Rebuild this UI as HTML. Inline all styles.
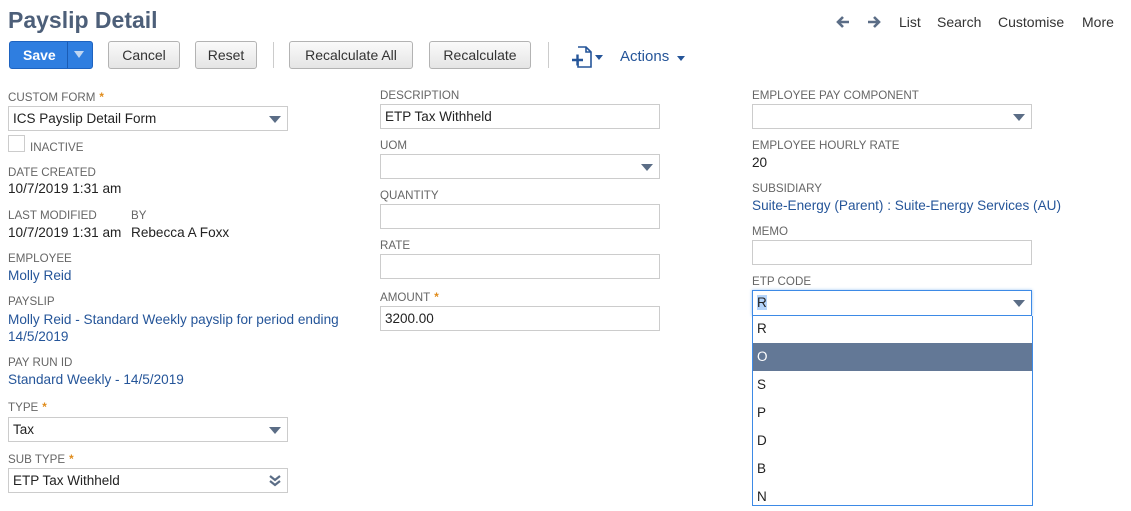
<!DOCTYPE html>
<html><head><meta charset="utf-8"><style>
*{box-sizing:border-box;margin:0;padding:0}
body{width:1131px;height:500px;overflow:hidden;background:#fff;font-family:"Liberation Sans",sans-serif;font-size:13.6px;color:#222;position:relative}
.a{position:absolute;white-space:nowrap}
.lbl{position:absolute;font-size:11.6px;color:#666;line-height:14px;white-space:nowrap}
.lbl b{color:#e08c1c;font-weight:bold;margin-left:4px}
.val{position:absolute;line-height:16px;white-space:nowrap}
.lnk{color:#255599}
.inp{position:absolute;border:1px solid #ccc;height:25px;width:280px;background:#fff;line-height:23px;padding-left:4px;font-size:13.5px}
.tri{position:absolute;right:6px;top:9px;width:0;height:0;border-left:6px solid transparent;border-right:6px solid transparent;border-top:7px solid #5b6d86}
.btn{position:absolute;top:41px;height:28px;border:1px solid #b3b3b3;border-radius:3px;background:linear-gradient(#fafafa,#e5e5e5);font-size:14px;line-height:26px;text-align:center;color:#333}
.sep{position:absolute;top:42px;width:1px;height:26px;background:#ccc}
.nav{position:absolute;top:14px;font-size:14px;color:#333}
.opt{position:absolute;left:753px;width:279px;height:28px;line-height:28px;padding-left:4px;font-size:13.5px}
</style></head><body>
<div class="a" style="left:8px;top:7px;font-size:23px;font-weight:bold;color:#4d5f79">Payslip Detail</div>

<div class="a" style="left:9px;top:41px;width:84px;height:28px;background:#2f7ee0;border:1px solid #1e63c0;border-radius:3px;color:#fff;font-size:14px;font-weight:bold;line-height:26px">
 <span style="position:absolute;left:13px">Save</span>
 <span style="position:absolute;left:57px;top:0;width:1px;height:26px;background:#1a5cb5"></span>
 <span style="position:absolute;left:64px;top:9px;border-left:5px solid transparent;border-right:5px solid transparent;border-top:7px solid #c0d6f2"></span>
</div>
<div class="btn" style="left:108px;width:72px">Cancel</div>
<div class="btn" style="left:195px;width:62px">Reset</div>
<div class="sep" style="left:273px"></div>
<div class="btn" style="left:289px;width:124px">Recalculate All</div>
<div class="btn" style="left:429px;width:102px">Recalculate</div>
<div class="sep" style="left:548px"></div>
<svg class="a" style="left:570px;top:45px" width="36" height="24" viewBox="0 0 36 24"><path d="M8 2h8l5 5v15H8v-6M16 2v5h5" fill="none" stroke="#255599" stroke-width="1.6"/><path d="M2 15h11M7.5 9.5v11" stroke="#255599" stroke-width="2.4"/><path d="M25 10h8l-4 5z" fill="#255599"/></svg>
<div class="a" style="left:620px;top:48px;font-size:15px;color:#255599">Actions</div>
<div class="a" style="left:677px;top:56px;border-left:4px solid transparent;border-right:4px solid transparent;border-top:5px solid #255599"></div>

<svg class="a" style="left:835px;top:15px" width="50" height="14" viewBox="0 0 50 14"><path d="M14 7H3M8 2L3 7l5 5" fill="none" stroke="#5b6d86" stroke-width="2.6"/><path d="M33 7h11M39 2l5 5-5 5" fill="none" stroke="#5b6d86" stroke-width="2.6"/></svg>
<div class="nav" style="left:899px">List</div>
<div class="nav" style="left:937px">Search</div>
<div class="nav" style="left:998px">Customise</div>
<div class="nav" style="left:1082px">More</div>

<!-- col 1 -->
<div class="lbl" style="left:8px;top:91px">CUSTOM FORM<b>*</b></div>
<div class="inp" style="left:8px;top:106px">ICS Payslip Detail Form<span class="tri"></span></div>
<div class="a" style="left:8px;top:135px;width:17px;height:17px;border:1px solid #ccc"></div>
<div class="lbl" style="left:30px;top:141px">INACTIVE</div>
<div class="lbl" style="left:8px;top:166px">DATE CREATED</div>
<div class="val" style="left:8px;top:181px">10/7/2019 1:31 am</div>
<div class="lbl" style="left:8px;top:209px">LAST MODIFIED</div>
<div class="lbl" style="left:131px;top:209px">BY</div>
<div class="val" style="left:8px;top:225px">10/7/2019 1:31 am</div>
<div class="val" style="left:131px;top:225px">Rebecca A Foxx</div>
<div class="lbl" style="left:8px;top:252px">EMPLOYEE</div>
<div class="val lnk" style="left:8px;top:268px">Molly Reid</div>
<div class="lbl" style="left:8px;top:295px">PAYSLIP</div>
<div class="val lnk" style="left:8px;top:312px">Molly Reid - Standard Weekly payslip for period ending</div>
<div class="val lnk" style="left:8px;top:329px">14/5/2019</div>
<div class="lbl" style="left:8px;top:356px">PAY RUN ID</div>
<div class="val lnk" style="left:8px;top:372px">Standard Weekly - 14/5/2019</div>
<div class="lbl" style="left:8px;top:401px">TYPE<b>*</b></div>
<div class="inp" style="left:8px;top:417px">Tax<span class="tri"></span></div>
<div class="lbl" style="left:8px;top:453px">SUB TYPE<b>*</b></div>
<div class="inp" style="left:8px;top:468px">ETP Tax Withheld<svg style="position:absolute;right:5px;top:5px" width="14" height="14" viewBox="0 0 14 14"><path d="M2 2l5 4 5-4M2 7l5 4 5-4" fill="none" stroke="#5b6d86" stroke-width="2.2"/></svg></div>

<!-- col 2 -->
<div class="lbl" style="left:380px;top:89px">DESCRIPTION</div>
<div class="inp" style="left:380px;top:104px">ETP Tax Withheld</div>
<div class="lbl" style="left:380px;top:139px">UOM</div>
<div class="inp" style="left:380px;top:154px"><span class="tri"></span></div>
<div class="lbl" style="left:380px;top:189px">QUANTITY</div>
<div class="inp" style="left:380px;top:204px"></div>
<div class="lbl" style="left:380px;top:239px">RATE</div>
<div class="inp" style="left:380px;top:254px"></div>
<div class="lbl" style="left:380px;top:291px">AMOUNT<b>*</b></div>
<div class="inp" style="left:380px;top:306px">3200.00</div>

<!-- col 3 -->
<div class="lbl" style="left:752px;top:89px">EMPLOYEE PAY COMPONENT</div>
<div class="inp" style="left:752px;top:104px"><span class="tri"></span></div>
<div class="lbl" style="left:752px;top:139px">EMPLOYEE HOURLY RATE</div>
<div class="val" style="left:752px;top:155px">20</div>
<div class="lbl" style="left:752px;top:182px">SUBSIDIARY</div>
<div class="val lnk" style="left:752px;top:198px">Suite-Energy (Parent) : Suite-Energy Services (AU)</div>
<div class="lbl" style="left:752px;top:225px">MEMO</div>
<div class="inp" style="left:752px;top:240px"></div>
<div class="lbl" style="left:752px;top:275px">ETP CODE</div>
<div class="inp" style="left:752px;top:290px;height:26px;border-color:#3d8ae6;box-shadow:0 0 3px #9cc4f2"><span style="background:#b5d5fb">R</span><span class="tri"></span></div>
<div class="a" style="left:752px;top:316px;width:281px;height:190px;border:1px solid #3d8ae6;border-top:none;background:#fff"></div>
<div class="opt" style="top:315px">R</div>
<div class="opt" style="top:343px;background:#637896;color:#fff">O</div>
<div class="opt" style="top:371px">S</div>
<div class="opt" style="top:399px">P</div>
<div class="opt" style="top:427px">D</div>
<div class="opt" style="top:455px">B</div>
<div class="opt" style="top:483px">N</div>
</body></html>
